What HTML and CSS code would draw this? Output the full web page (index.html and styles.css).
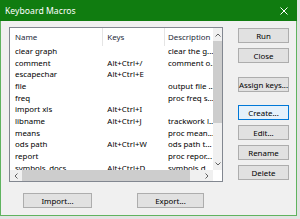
FILE: index.html
```html
<!DOCTYPE html>
<html>
<head>
<meta charset="utf-8">
<link rel="stylesheet" href="styles.css">
</head>
<body>
<div class="win">
  <div class="titlebar">
    <span class="title">Keyboard Macros</span>
    <svg class="x" width="8" height="8" viewBox="0 0 8 8"><path d="M0.5 0.5L7.5 7.5M7.5 0.5L0.5 7.5" stroke="#fff" stroke-width="1"/></svg>
  </div>
  <div class="content">
    <div class="main">
      <div class="list">
        <div class="view">
          <div class="row head">
            <div class="c name">Name</div><div class="sep"></div>
            <div class="c keys">Keys</div><div class="sep"></div>
            <div class="c desc">Description</div>
          </div>
          <div class="row"><div class="c name">clear graph</div><div class="gap"></div><div class="c keys"></div><div class="gap"></div><div class="c desc">clear the g...</div></div>
          <div class="row"><div class="c name">comment</div><div class="gap"></div><div class="c keys">Alt+Ctrl+/</div><div class="gap"></div><div class="c desc">comment o...</div></div>
          <div class="row"><div class="c name">escapechar</div><div class="gap"></div><div class="c keys">Alt+Ctrl+E</div><div class="gap"></div><div class="c desc"></div></div>
          <div class="row"><div class="c name">file</div><div class="gap"></div><div class="c keys"></div><div class="gap"></div><div class="c desc">output file ...</div></div>
          <div class="row"><div class="c name">freq</div><div class="gap"></div><div class="c keys"></div><div class="gap"></div><div class="c desc">proc freq s...</div></div>
          <div class="row"><div class="c name">import xls</div><div class="gap"></div><div class="c keys">Alt+Ctrl+I</div><div class="gap"></div><div class="c desc"></div></div>
          <div class="row"><div class="c name">libname</div><div class="gap"></div><div class="c keys">Alt+Ctrl+J</div><div class="gap"></div><div class="c desc">trackwork l...</div></div>
          <div class="row"><div class="c name">means</div><div class="gap"></div><div class="c keys"></div><div class="gap"></div><div class="c desc">proc mean...</div></div>
          <div class="row"><div class="c name">ods path</div><div class="gap"></div><div class="c keys">Alt+Ctrl+W</div><div class="gap"></div><div class="c desc">ods path t...</div></div>
          <div class="row"><div class="c name">report</div><div class="gap"></div><div class="c keys"></div><div class="gap"></div><div class="c desc">proc repor...</div></div>
          <div class="row"><div class="c name">symbols_docs</div><div class="gap"></div><div class="c keys">Alt+Ctrl+D</div><div class="gap"></div><div class="c desc">symbols d...</div></div>
        </div>
        <div class="vscroll">
          <div class="arrow"><svg width="6" height="4" viewBox="0 0 6 4"><path d="M0.5 3.5L3 1L5.5 3.5" fill="none" stroke="#606060" stroke-width="1"/></svg></div>
          <div class="vtrack"><div class="vthumb"></div></div>
          <div class="arrow"><svg width="6" height="4" viewBox="0 0 6 4"><path d="M0.5 0.5L3 3L5.5 0.5" fill="none" stroke="#606060" stroke-width="1"/></svg></div>
        </div>
        <div class="hscroll">
          <div class="harrow"><svg width="4" height="6" viewBox="0 0 4 6"><path d="M3.5 0.5L1 3L3.5 5.5" fill="none" stroke="#606060" stroke-width="1"/></svg></div>
          <div class="htrack"><div class="hthumb"></div></div>
          <div class="harrow"><svg width="4" height="6" viewBox="0 0 4 6"><path d="M0.5 0.5L3 3L0.5 5.5" fill="none" stroke="#606060" stroke-width="1"/></svg></div>
        </div>
        <div class="corner"></div>
      </div>
      <div class="buttons">
        <div class="btn">Run</div>
        <div class="btn">Close</div>
        <div class="btn gap-l">Assign keys...</div>
        <div class="btn def gap-m">Create...</div>
        <div class="btn">Edit...</div>
        <div class="btn">Rename</div>
        <div class="btn">Delete</div>
      </div>
    </div>
    <div class="bottom">
      <div class="btn wide1">Import...</div>
      <div class="btn wide2">Export...</div>
    </div>
  </div>
</div>
</body>
</html>
```
FILE: styles.css
```css
html, body {
  margin: 0;
  padding: 0;
  width: 300px;
  height: 219px;
  background: #e3e3e3;
  overflow: hidden;
  font-family: "Noto Sans", "Open Sans", sans-serif;
}
.win {
  width: 295px;
  height: 215px;
  border: 1px solid #5fb35f;
  border-top: none;
  background: #f0f0f0;
  display: flex;
  flex-direction: column;
}
.titlebar {
  height: 21px;
  margin: 0 -1px;
  background: #107c10;
  display: flex;
  align-items: center;
  justify-content: space-between;
  padding: 0 9px 0 5px;
  flex: none;
}
.title {
  color: #fff;
  font-size: 8.6px;
  letter-spacing: 0.05px;
}
.x { display: block; margin-top: 1px; }
.content {
  padding: 6px 0 0 8px;
  display: flex;
  flex-direction: column;
}
.main {
  display: flex;
  gap: 15px;
}
.list {
  width: 212px;
  height: 153px;
  border: 1px solid #828790;
  background: #fff;
  display: grid;
  grid-template-columns: 203px 9px;
  grid-template-rows: 142px 11px;
}
.view {
  overflow: hidden;
  font-size: 7.9px;
  color: #000;
}
.row {
  display: flex;
  height: 11.67px;
  line-height: 11.67px;
  white-space: nowrap;
}
.row.head {
  height: 18px;
  line-height: 18px;
  color: #1e2a3a;
}
.c { overflow: hidden; }
.name { width: 91px; padding-left: 5px; }
.keys { width: 59px; padding-left: 4px; }
.desc { width: 45px; padding-left: 3px; flex: none; }
.sep { width: 1px; background: #e5e5e5; flex: none; }
.gap { width: 1px; flex: none; }
.vscroll {
  background: #f0f0f0;
  display: flex;
  flex-direction: column;
}
.arrow {
  height: 13px;
  display: flex;
  align-items: center;
  justify-content: center;
  flex: none;
}
.vtrack { flex: 1; display: flex; flex-direction: column; }
.vthumb { height: 82px; background: #cdcdcd; }
.hscroll {
  background: #f0f0f0;
  display: flex;
}
.harrow {
  width: 12px;
  display: flex;
  align-items: center;
  justify-content: center;
  flex: none;
}
.htrack { flex: 1; display: flex; }
.hthumb { width: 168px; background: #cdcdcd; }
.corner { background: #fff; }
.buttons {
  display: flex;
  flex-direction: column;
  gap: 5px;
  padding-top: 1px;
}
.btn {
  box-sizing: border-box;
  width: 51px;
  height: 15px;
  border: 1px solid #adadad;
  background: #e1e1e1;
  font-size: 7.9px;
  color: #000;
  display: flex;
  align-items: center;
  justify-content: center;
  white-space: nowrap;
}
.btn.def {
  border-color: #0078d7;
  background: #e5f1fb;
}
.gap-l { margin-top: 9px; }
.gap-m { margin-top: 8px; }
.bottom {
  display: flex;
  gap: 45px;
  margin-top: 11px;
  padding-left: 14px;
}
.wide1 { width: 69px; }
.wide2 { width: 67px; }
```
